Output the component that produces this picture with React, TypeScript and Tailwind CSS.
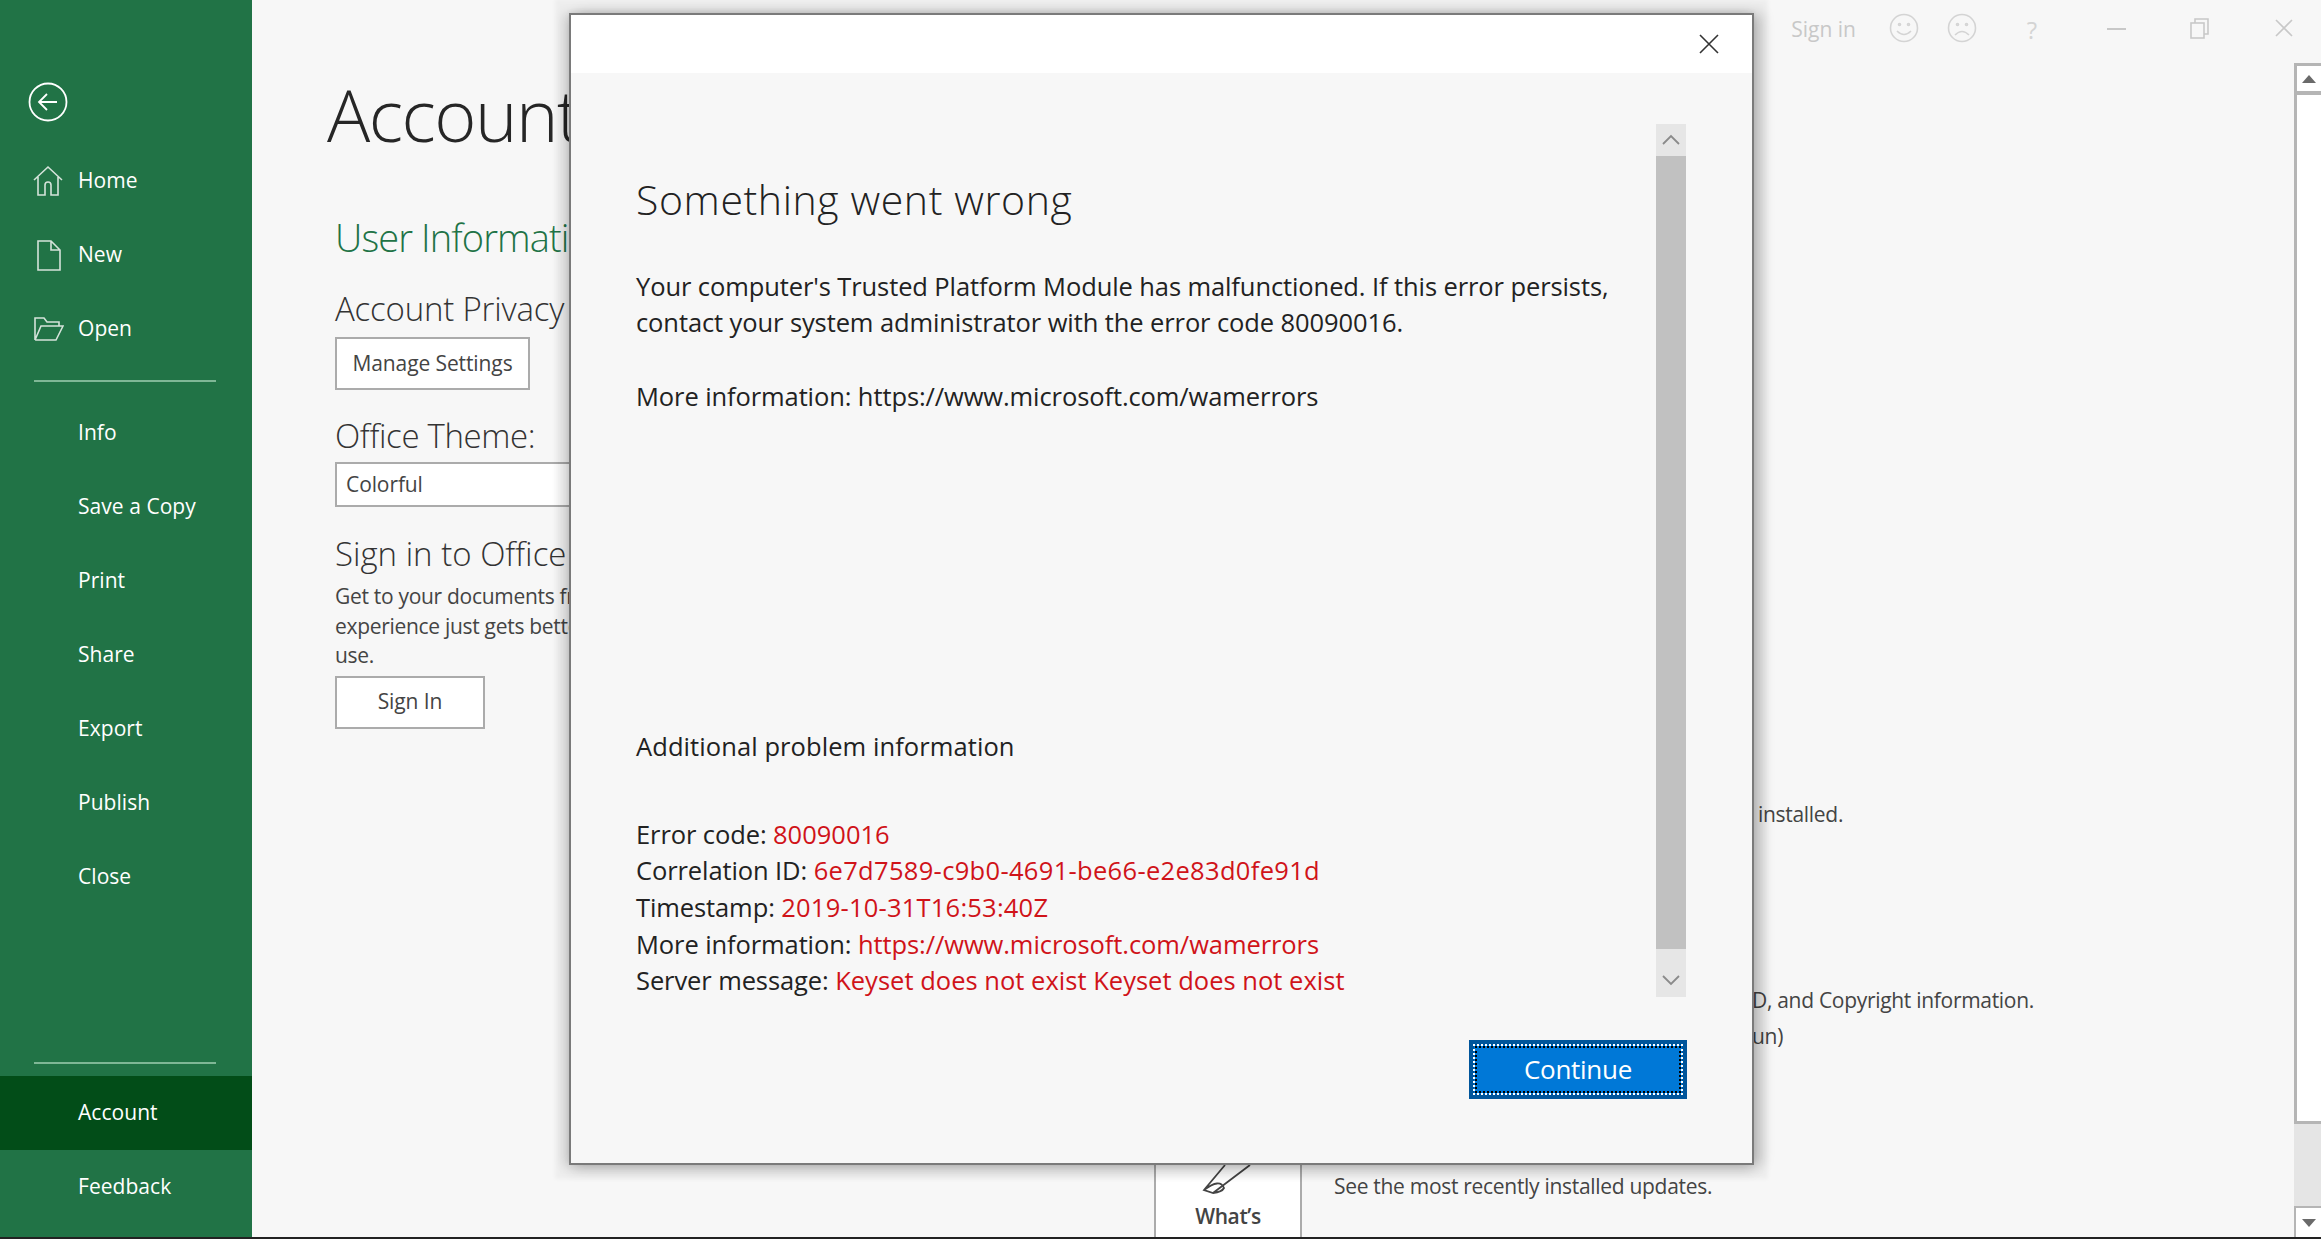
import React from "react";

const font = { fontFamily: '"Open Sans", sans-serif' };

const Stroke = ({ children, w = 32, h = 32 }: { children: React.ReactNode; w?: number; h?: number }) => (
  <svg width={w} height={h} viewBox={`0 0 ${w} ${h}`} fill="none" stroke="currentColor" strokeWidth="1.6">{children}</svg>
);

const NavItem = ({ label, icon, active }: { label: string; icon?: React.ReactNode; active?: boolean }) => (
  <div className={`relative h-[74px] flex items-center pl-[78px] text-[21px] text-white tracking-[0.05px] ${active ? "bg-[#024d18]" : ""}`}>
    {icon && <span className="absolute left-[32px] top-[21px] text-[#d5e3da]">{icon}</span>}
    {label}
  </div>
);

const Divider = () => <div className="mx-[34px] w-[182px] h-[2px] bg-[#7fb796]" />;

const OutlineButton = ({ label, cls }: { label: string; cls: string }) => (
  <div className={`bg-white border-2 border-[#ababab] flex items-center justify-center text-[21px] text-[#444] tracking-[-0.1px] ${cls}`}>{label}</div>
);

const Kv = ({ k, v, t }: { k: string; v: string; t: string }) => (
  <div className="h-[36.6px] leading-[36.6px]">{k}: <span className={`text-[#d01319] ${t}`}>{v}</span></div>
);

export default function App() {
  return (
    <div className="relative w-[2321px] h-[1239px] overflow-hidden flex bg-[#f7f7f7]" style={font}>
      <aside className="w-[252px] h-full bg-[#217346] flex flex-col shrink-0 pt-[82px]">
        <div className="pl-[28px] h-[62px] text-white">
          <svg width="40" height="40" viewBox="0 0 40 40" fill="none" stroke="currentColor" strokeWidth="1.8"><circle cx="20" cy="20" r="18.5" /><path d="M29 20 H11 M19 12 L11 20 L19 28" /></svg>
        </div>
        <NavItem label="Home" icon={<Stroke><path d="M2 15 L16 2 L30 15 M6 12 V30 H13 V20 Q13 17 16 17 Q19 17 19 20 V30 H26 V12" /></Stroke>} />
        <NavItem label="New" icon={<Stroke><path d="M6 2 H19 L28 11 V31 H6 Z M19 2 V11 H28" /></Stroke>} />
        <NavItem label="Open" icon={<Stroke><path d="M3 27 V5 H12 L15 9 H27 V13 M3 27 H24 L31 13 H9 L3 27" /></Stroke>} />
        <div className="h-[16px] flex items-end"><Divider /></div>
        <div className="h-[14px]" />
        <NavItem label="Info" />
        <NavItem label="Save a Copy" />
        <NavItem label="Print" />
        <NavItem label="Share" />
        <NavItem label="Export" />
        <NavItem label="Publish" />
        <NavItem label="Close" />
        <div className="flex-1 flex flex-col justify-end pb-[12px]"><Divider /></div>
        <NavItem label="Account" active />
        <NavItem label="Feedback" />
        <div className="h-[15px]" />
      </aside>

      <main className="flex-1 relative">
        <div className="pl-[83px] pt-[66px] text-[#333]">
          <h1 className="-ml-[8px] text-[72px] leading-[96px] font-light tracking-[-1.5px] text-[#262626]">Account</h1>
          <h2 className="mt-[51px] text-[38px] leading-[48px] font-light text-[#217346] tracking-[-0.9px] whitespace-nowrap">User Information</h2>
          <h3 className="mt-[26px] text-[33px] leading-[44px] font-light tracking-[-0.2px] text-[#333]">Account Privacy</h3>
          <OutlineButton label="Manage Settings" cls="mt-[6px] w-[195px] h-[53px]" />
          <h3 className="mt-[24px] text-[33px] leading-[44px] font-light tracking-[-0.35px]">Office Theme:</h3>
          <div className="mt-[4px] w-[400px] h-[45px] bg-white border-2 border-[#ababab] flex items-center pl-[9px] text-[21px] text-[#444] tracking-[-0.1px]">Colorful</div>
          <h3 className="mt-[25px] text-[33px] leading-[44px] font-light tracking-[0px]">Sign in to Office</h3>
          <div className="mt-[6px] w-[400px] text-[21px] leading-[29.5px] text-[#444] tracking-[-0.3px]">
            <div className="whitespace-nowrap">Get to your documents from anywhere</div>
            <div className="whitespace-nowrap">experience just gets better with every</div>
            <div>use.</div>
          </div>
          <OutlineButton label="Sign In" cls="mt-[5px] w-[150px] h-[53px]" />
        </div>

        {/* right-side content behind the dialog */}
        <div className="absolute left-[1506px] top-[799px] text-[21px] text-[#444] whitespace-nowrap tracking-[-0.3px]">installed.</div>
        <div className="absolute left-[1500px] top-[985px] text-[21px] text-[#444] whitespace-nowrap tracking-[-0.3px]">D, and Copyright information.</div>
        <div className="absolute left-[1500px] top-[1021px] text-[21px] text-[#444] whitespace-nowrap tracking-[-0.3px]">un)</div>
        <div className="absolute left-[902px] top-[1130px] w-[148px] h-[109px] bg-white border-x-2 border-[#ababab] flex flex-col items-center justify-end pb-[7px] text-[21px] font-semibold text-[#444] tracking-[-0.4px]">
          <svg className="absolute left-[44px] top-[30px]" width="54" height="38" viewBox="0 0 54 38" fill="none" stroke="#444" strokeWidth="1.8"><path d="M25 5 L4 30 L13 33 L50 5 M4 30 Q20 18 24 28 Q22 32 13 33" /></svg>
          What’s
        </div>
        <div className="absolute left-[1082px] top-[1171px] text-[21px] text-[#444] whitespace-nowrap tracking-[-0.3px]">See the most recently installed updates.</div>

        {/* title bar controls */}
        <div className="absolute top-0 right-0 h-[56px] text-[#c8c8c8]">
          <span className="absolute right-[465px] top-[14px] text-[21px] tracking-[0px] whitespace-nowrap">Sign in</span>
          <svg className="absolute right-[401px] top-[12px]" width="32" height="32" viewBox="0 0 32 32" fill="none" stroke="#d4d4d4" strokeWidth="1.6"><circle cx="16" cy="16" r="13.5" /><circle cx="11.5" cy="12.5" r="1" /><circle cx="20.5" cy="12.5" r="1" /><path d="M9 19 Q16 26 23 19" /></svg>
          <svg className="absolute right-[343px] top-[12px]" width="32" height="32" viewBox="0 0 32 32" fill="none" stroke="#d4d4d4" strokeWidth="1.6"><circle cx="16" cy="16" r="13.5" /><circle cx="11.5" cy="12.5" r="1" /><circle cx="20.5" cy="12.5" r="1" /><path d="M9 23 Q16 16 23 23" /></svg>
          <span className="absolute right-[284px] top-[12px] text-[24px] text-[#d4d4d4]">?</span>
          <div className="absolute right-[195px] top-[28px] w-[19px] h-[2px] bg-[#c8c8c8]" />
          <svg className="absolute right-[111px] top-[17px]" width="20" height="22" viewBox="0 0 20 22" fill="none" stroke="currentColor" strokeWidth="1.6"><rect x="1" y="6" width="13" height="15" /><path d="M5 6 V2 H18 V17 H14" /></svg>
          <svg className="absolute right-[27px] top-[18px]" width="20" height="20" viewBox="0 0 20 20" fill="none" stroke="currentColor" strokeWidth="1.6"><path d="M2 2 L18 18 M18 2 L2 18" /></svg>
        </div>

        {/* outer scrollbar */}
        <div className="absolute right-0 top-[63px] bottom-[2px] w-[27px] bg-[#e5e5e5] flex flex-col">
          <div className="h-[32px] bg-white border-t-[3px] border-l-[3px] border-b-[4px] border-[#b5b5b5] flex items-center justify-center"><span className="w-0 h-0 border-x-[7px] border-x-transparent border-b-[8px] border-b-[#6a6a6a]" /></div>
          <div className="h-[1029px] bg-white border-l-[3px] border-b-[3px] border-[#b5b5b5]" />
          <div className="flex-1" />
          <div className="h-[31px] bg-white border-t-[2px] border-l-[2px] border-[#b5b5b5] flex items-center justify-center"><span className="w-0 h-0 border-x-[7px] border-x-transparent border-t-[8px] border-t-[#6a6a6a]" /></div>
        </div>
      </main>

      <div className="absolute left-0 right-0 bottom-0 h-[2px] bg-[#222]" />

      {/* modal */}
      <div className="absolute left-[569px] top-[13px] w-[1185px] h-[1152px] bg-[#f7f7f7] border-2 border-[#7a7a7a] shadow-[8px_0_12px_rgba(0,0,0,0.18),-6px_0_10px_rgba(0,0,0,0.1),0_6px_12px_rgba(0,0,0,0.1),0_-2px_4px_rgba(0,0,0,0.04),0_0_4px_14px_rgba(0,0,0,0.04)] flex flex-col">
        <div className="h-[58px] bg-white flex justify-end items-center pr-[33px] shrink-0">
          <svg width="20" height="20" viewBox="0 0 20 20" fill="none" stroke="#333" strokeWidth="1.6"><path d="M1 1 L19 19 M19 1 L1 19" /></svg>
        </div>
        <div className="flex-1 flex pl-[65px] pr-[66px] pt-[51px] relative">
          <div className="flex-1 text-[#222] tracking-[-0.1px]">
            <h1 className="mt-[47px] text-[41px] leading-[56px] font-light tracking-[0.6px]">Something went wrong</h1>
            <p className="mt-[41px] text-[25.5px] leading-[36.3px]">Your computer's Trusted Platform Module has malfunctioned. If this error persists,<br />contact your system administrator with the error code 80090016.</p>
            <p className="mt-[37px] text-[25.5px] leading-[36.6px]">More information: https://www.microsoft.com/wamerrors</p>
            <p className="mt-[314px] text-[25.5px] leading-[36.6px] tracking-[0.08px]">Additional problem information</p>
            <div className="mt-[51px] text-[25.5px]">
              <Kv k="Error code" v="80090016" t="tracking-[0px]" />
              <Kv k="Correlation ID" v="6e7d7589-c9b0-4691-be66-e2e83d0fe91d" t="tracking-[0.32px]" />
              <Kv k="Timestamp" v="2019-10-31T16:53:40Z" t="tracking-[0.22px]" />
              <Kv k="More information" v="https://www.microsoft.com/wamerrors" t="tracking-[-0.08px]" />
              <Kv k="Server message" v="Keyset does not exist Keyset does not exist" t="tracking-[0.02px]" />
            </div>
          </div>
          <div className="absolute right-[66px] top-[51px] w-[30px] h-[873px] bg-[#e6e6e6] flex flex-col">
            <div className="h-[32px] flex items-center justify-center"><svg width="20" height="12" viewBox="0 0 20 12" fill="none" stroke="#8a8a8a" strokeWidth="1.8"><path d="M2 10 L10 2 L18 10" /></svg></div>
            <div className="h-[793px] bg-[#c1c1c1]" />
            <div className="flex-1 flex items-end justify-center pb-[11px]"><svg width="20" height="12" viewBox="0 0 20 12" fill="none" stroke="#8a8a8a" strokeWidth="1.8"><path d="M2 2 L10 10 L18 2" /></svg></div>
          </div>
        </div>
        <div className="absolute left-[898px] top-[1025px] w-[218px] h-[59px] bg-[#0078d7] border-[5px] border-[#00559b] flex items-center justify-center p-[1px]">
          <div className="w-full h-full outline-2 outline-dotted outline-white border-2 border-dotted border-black flex items-center justify-center text-white text-[26px] tracking-[-0.3px]">Continue</div>
        </div>
      </div>
    </div>
  );
}
